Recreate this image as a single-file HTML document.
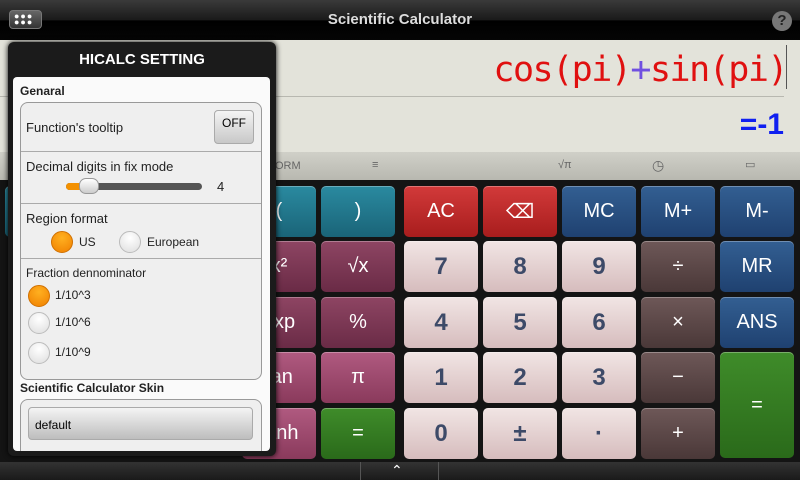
<!DOCTYPE html><html><head><style>
*{margin:0;padding:0;box-sizing:border-box}
body{width:800px;height:480px;overflow:hidden;background:#151515;font-family:"Liberation Sans","DejaVu Sans",sans-serif;position:relative}
.a{position:absolute}
.top{left:0;top:0;width:800px;height:40px;background:linear-gradient(#3a3a3a,#1a1a1a 50%,#000 52%,#050505)}
.disp{left:0;top:40px;width:800px;height:140px;background:#e3e3da}
.tb{left:0;top:152px;width:800px;height:28px;background:linear-gradient(#d0d0c8,#b8b8b0);color:#666;font-size:11px}
.k{position:absolute;width:74px;height:51px;border-radius:5px;color:#fff;font-size:20px;display:flex;align-items:center;justify-content:center;box-shadow:inset 0 1px 0 rgba(255,255,255,.3)}
.red{background:linear-gradient(#d23a3a,#a81d1d)}
.blue{background:linear-gradient(#335f92,#1f4170)}
.num{background:linear-gradient(#f1e5e4,#d6bcbd);color:#3d4a68;font-weight:bold;font-size:24px}
.op{background:linear-gradient(#6e5858,#4a3838)}
.mag{background:linear-gradient(#8e4563,#6a2b46)}
.pink{background:linear-gradient(#b05a80,#8a3a5c)}
.teal{background:linear-gradient(#2a8aa0,#1a6478)}
.grn{background:linear-gradient(#3f8c2a,#2a6a1a)}
.dlg{left:8px;top:42px;width:268px;height:414px;background:#1b1b1b;border-radius:6px;box-shadow:0 0 6px #000}
.pan{left:13px;top:77px;width:257px;height:374px;background:#fafafa;border-radius:4px;overflow:hidden}
.grp{position:absolute;left:7px;top:25px;width:242px;height:278px;border:1px solid #999;border-radius:8px;background:#efefef}
.t{position:absolute;font-size:13px;color:#222}
.rad{position:absolute;width:22px;height:22px;border-radius:50%;border:1px solid #bbb;background:radial-gradient(circle at 50% 30%,#fff,#ddd)}
.rad.on{background:radial-gradient(circle at 50% 30%,#ffb020,#f08000);border-color:#d07000}
.hr{position:absolute;left:0;width:240px;height:1px;background:#aaa}
</style></head><body>
<div class="a top"></div>
<div class="a" style="left:9px;top:10px;width:33px;height:19px;border-radius:4px;background:linear-gradient(#666,#333);border:1px solid #777"></div>
<div class="a" style="left:14px;top:13px;color:#fff;font-size:9px;letter-spacing:1px;line-height:6px">●●●<br>●●●</div>
<div class="a" style="left:0;width:800px;top:11px;text-align:center;color:#ddd;font-weight:bold;font-size:15px">Scientific Calculator</div>
<div class="a" style="left:772px;top:11px;width:20px;height:20px;border-radius:50%;background:#777;color:#222;font-weight:bold;font-size:15px;text-align:center;line-height:20px">?</div>
<div class="a disp"></div>
<div class="a" style="left:0;top:96px;width:784px;height:1px;background:#b8b8b0"></div>
<div class="a" style="right:13px;top:49px;font-family:'DejaVu Sans Mono',monospace;font-size:35px;color:#e01010;line-height:42px;letter-spacing:-1.5px">cos(pi)<span style="color:#7050e0">+</span>sin(pi)</div>
<div class="a" style="left:786px;top:45px;width:1px;height:44px;background:#555"></div>
<div class="a" style="right:16px;top:108px;font-size:30px;color:#1020f0;font-weight:bold">=-1</div>
<div class="a tb"><span class="a" style="left:275px;top:8px">ORM</span><span class="a" style="left:372px;top:7px">≡</span><span class="a" style="left:558px;top:7px">√π</span><span class="a" style="left:652px;top:5px;font-size:14px">◷</span><span class="a" style="left:745px;top:6px">▭</span></div>
<div class="a" style="left:0;top:180px;width:800px;height:282px;background:#141414"></div>
<div class="k teal" style="left:5px;top:186px"></div>
<div class="k teal" style="left:242px;top:186px">(</div><div class="k teal" style="left:321px;top:186px">)</div>
<div class="k mag" style="left:242px;top:241px">x²</div><div class="k mag" style="left:321px;top:241px">√x</div>
<div class="k mag" style="left:242px;top:297px">exp</div><div class="k mag" style="left:321px;top:297px">%</div>
<div class="k pink" style="left:242px;top:352px">tan</div><div class="k pink" style="left:321px;top:352px">π</div>
<div class="k pink" style="left:242px;top:408px">tanh</div><div class="k grn" style="left:321px;top:408px">=</div>
<div class="k red" style="left:404px;top:186px">AC</div><div class="k red" style="left:483px;top:186px">⌫</div>
<div class="k blue" style="left:562px;top:186px">MC</div><div class="k blue" style="left:641px;top:186px">M+</div><div class="k blue" style="left:720px;top:186px">M-</div>
<div class="k num" style="left:404px;top:241px">7</div><div class="k num" style="left:483px;top:241px">8</div><div class="k num" style="left:562px;top:241px">9</div><div class="k op" style="left:641px;top:241px">÷</div><div class="k blue" style="left:720px;top:241px">MR</div>
<div class="k num" style="left:404px;top:297px">4</div><div class="k num" style="left:483px;top:297px">5</div><div class="k num" style="left:562px;top:297px">6</div><div class="k op" style="left:641px;top:297px">×</div><div class="k blue" style="left:720px;top:297px">ANS</div>
<div class="k num" style="left:404px;top:352px">1</div><div class="k num" style="left:483px;top:352px">2</div><div class="k num" style="left:562px;top:352px">3</div><div class="k op" style="left:641px;top:352px">−</div>
<div class="k grn" style="left:720px;top:352px;height:106px">=</div>
<div class="k num" style="left:404px;top:408px">0</div><div class="k num" style="left:483px;top:408px">±</div><div class="k num" style="left:562px;top:408px">·</div><div class="k op" style="left:641px;top:408px">+</div>
<div class="a" style="left:0;top:462px;width:800px;height:18px;background:linear-gradient(#333,#1a1a1a)"></div>
<div class="a" style="left:360px;top:462px;width:1px;height:18px;background:#555"></div><div class="a" style="left:438px;top:462px;width:1px;height:18px;background:#555"></div>
<div class="a" style="left:391px;top:462px;color:#fff;font-size:14px">⌃</div>
<div class="a dlg"></div>
<div class="a" style="left:8px;top:51px;width:268px;text-align:center;color:#fff;font-weight:bold;font-size:15px">HICALC SETTING</div>
<div class="a pan">
<div class="t" style="left:7px;top:7px;font-weight:bold;font-size:12px">Genaral</div>
<div class="grp">
<div class="t" style="left:5px;top:17px">Function's tooltip</div>
<div class="a" style="left:193px;top:7px;width:40px;height:34px;border-radius:4px;background:linear-gradient(#f4f4f4,#c8c8c8);border:1px solid #aaa;font-size:12px;text-align:center;padding-top:5px">OFF</div>
<div class="hr" style="top:48px"></div>
<div class="t" style="left:5px;top:56px">Decimal digits in fix mode</div>
<div class="a" style="left:45px;top:80px;width:136px;height:7px;border-radius:4px;background:#555"></div>
<div class="a" style="left:45px;top:80px;width:20px;height:7px;border-radius:4px;background:#f39000"></div>
<div class="a" style="left:58px;top:75px;width:20px;height:16px;border-radius:7px;background:linear-gradient(#fff,#ccc);border:1px solid #999"></div>
<div class="t" style="left:196px;top:76px">4</div>
<div class="hr" style="top:100px"></div>
<div class="t" style="left:5px;top:108px">Region format</div>
<div class="rad on" style="left:30px;top:128px"></div><div class="t" style="left:58px;top:132px;font-size:12px">US</div>
<div class="rad" style="left:98px;top:128px"></div><div class="t" style="left:126px;top:132px;font-size:12px">European</div>
<div class="hr" style="top:155px"></div>
<div class="t" style="left:5px;top:163px;font-size:12px">Fraction dennominator</div>
<div class="rad on" style="left:7px;top:182px"></div><div class="t" style="left:34px;top:185px;font-size:12px">1/10^3</div>
<div class="rad" style="left:7px;top:209px"></div><div class="t" style="left:34px;top:212px;font-size:12px">1/10^6</div>
<div class="rad" style="left:7px;top:239px"></div><div class="t" style="left:34px;top:242px;font-size:12px">1/10^9</div>
</div>
<div class="t" style="left:7px;top:304px;font-weight:bold;font-size:12px">Scientific Calculator Skin</div>
<div class="grp" style="top:322px;height:70px"><div class="a" style="left:7px;top:7px;width:225px;height:33px;border-radius:4px;background:linear-gradient(#f4f4f4,#bdbdbd);border:1px solid #aaa;font-size:12px;padding:10px 6px">default</div></div>
</div>
</body></html>
